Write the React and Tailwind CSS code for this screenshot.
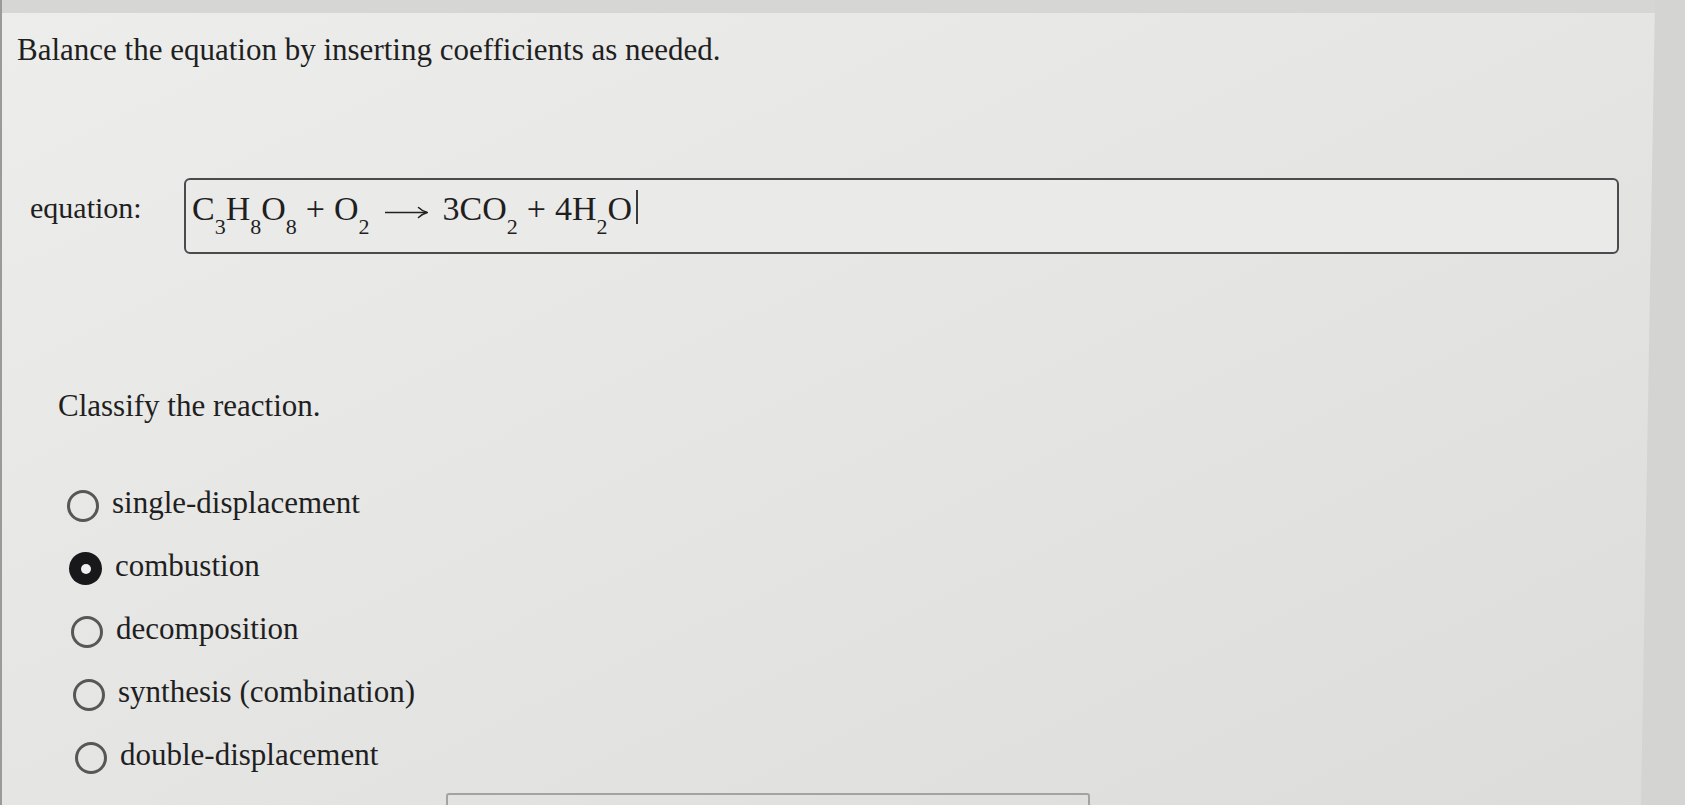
import React from "react";

function Arrow() {
  return (
    <svg width="43" height="14" viewBox="0 0 43 14" className="inline-block mx-[15px]" fill="none">
      <path d="M0 7.5 H42" stroke="#222222" strokeWidth="1.6" />
      <path d="M33.5 2.5 Q37 6 42.3 7.5 Q37 9 33.5 12.5" stroke="#222222" strokeWidth="1.5" strokeLinecap="round" />
    </svg>
  );
}

function Sub({ children }) {
  return <span className="text-[22px] align-[-14px]">{children}</span>;
}

function Plus() {
  return <span className="mx-[9px]">+</span>;
}

const options = [
  { label: "single-displacement", selected: false, cls: "ml-[65px]" },
  { label: "combustion", selected: true, cls: "ml-[67px]" },
  { label: "decomposition", selected: false, cls: "ml-[69px]" },
  { label: "synthesis (combination)", selected: false, cls: "ml-[71px]" },
  { label: "double-displacement", selected: false, cls: "ml-[73px]" },
];

function Radio({ selected }) {
  if (selected) {
    return (
      <span className="w-[33px] h-[33px] rounded-full bg-[#18181a] flex items-center justify-center shrink-0">
        <span className="w-[10px] h-[10px] rounded-full bg-[#efefef]" />
      </span>
    );
  }
  return <span className="w-[32px] h-[32px] rounded-full border-[3px] border-[#575757] shrink-0" />;
}

export default function App() {
  return (
    <div className="relative w-full h-[805px] overflow-hidden bg-linear-to-br from-[#ededec] via-[#e5e5e4] to-[#dcdcdb] text-[#1f1f1f] font-['Liberation_Serif','Times_New_Roman',serif] border-l-2 border-[#9a9a9a]">
      <div className="h-[13px] bg-[#d6d6d4]" />

      <div className="mt-[21px] ml-[15px] text-[31px] leading-[31px]">
        Balance the equation by inserting coefficients as needed.
      </div>

      <div className="mt-[113px] flex items-start">
        <div className="ml-[28px] mt-[15px] w-[154px] text-[30px] leading-[30px]">equation:</div>
        <div className="w-[1435px] h-[76px] border-2 border-[#4b4b4d] rounded-[6px] bg-[#eaeae9] pl-[6px] pt-[12px]">
          <div className="text-[34px] leading-[34px] whitespace-nowrap flex items-start">
            <span>
              C<Sub>3</Sub>H<Sub>8</Sub>O<Sub>8</Sub>
              <Plus />
              O<Sub>2</Sub>
              <Arrow />
              3CO<Sub>2</Sub>
              <Plus />
              4H<Sub>2</Sub>O
            </span>
            <span className="ml-[4px] mt-[-2px] w-[2px] h-[34px] bg-[#3a3a3a]" />
          </div>
        </div>
      </div>

      <div className="mt-[136px] ml-[56px] text-[31px] leading-[31px]">Classify the reaction.</div>

      <div className="mt-[53px] flex flex-col">
        {options.map((o) => (
          <div key={o.label} className={"h-[63px] flex items-center gap-[13px] " + o.cls}>
            <Radio selected={o.selected} />
            <span className="text-[31px] leading-[31px] mb-[7px]">{o.label}</span>
          </div>
        ))}
      </div>

      <div className="mt-[4px] ml-[444px] w-[644px] h-[30px] border-2 border-[#a3a3a3] rounded-t-[3px]" />

      <div className="absolute top-0 right-0 h-full w-[44px] bg-[#d4d4d2] [clip-path:polygon(14px_0,100%_0,100%_100%,0_100%)]" />
    </div>
  );
}
